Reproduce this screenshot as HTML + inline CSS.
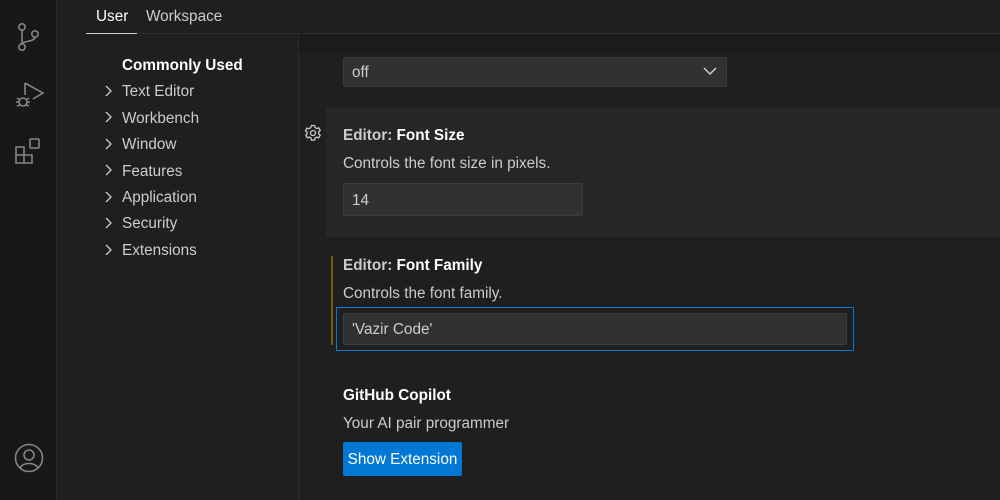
<!DOCTYPE html>
<html><head><style>
*{margin:0;padding:0;box-sizing:border-box}
body{width:1000px;height:500px;background:#1f1f1f;font-family:"Liberation Sans",sans-serif;color:#ccc;position:relative;overflow:hidden;font-size:15.3px}
.a{position:absolute}
.ab{left:0;top:0;width:57px;height:500px;background:#181818;border-right:1px solid #2b2b2b}
.t{white-space:nowrap}
.toc{left:122px;color:#ccc}
.box{background:#313131;border:1px solid #3c3c3c;border-radius:2px;color:#ccc;padding-left:8px;display:flex;align-items:center}
b{color:#fff}
</style></head><body>
<div class="a ab"></div>
<svg class="a" style="left:13px;top:20px" width="30" height="34" viewBox="0 0 30 34" fill="none" stroke="#858585" stroke-width="1.6"><circle cx="9" cy="7" r="3.2"/><circle cx="9" cy="27" r="3.2"/><circle cx="22" cy="14" r="3.2"/><path d="M9 10v14M22 17c0 5-13 4-13 7"/></svg>
<svg class="a" style="left:12px;top:78px" width="34" height="34" viewBox="0 0 34 34" fill="none" stroke="#858585" stroke-width="1.6"><path d="M13 5v12M13 5l18 10-10 6"/><circle cx="11" cy="24" r="4"/><path d="M5 20l3 2M5 28l3-1M17 20l-3 2M17 28l-3-1M4 24h3M15 24h3"/></svg>
<svg class="a" style="left:13px;top:136px" width="34" height="34" viewBox="0 0 34 34" fill="none" stroke="#858585" stroke-width="1.6"><path d="M3 11h8v8h8v8H3zM3 19h8v8M11 19v8"/><rect x="17" y="3" width="9" height="9" rx="1"/></svg>
<svg class="a" style="left:14px;top:443px" width="30" height="30" viewBox="0 0 30 30" fill="none" stroke="#858585" stroke-width="1.6"><circle cx="15" cy="15" r="13.5"/><circle cx="15" cy="12" r="5"/><path d="M6 25c3-6 15-6 18 0"/></svg>

<div class="a t" style="left:96px;top:8px;color:#fff">User</div>
<div class="a t" style="left:146px;top:8px;color:#ccc">Workspace</div>
<div class="a" style="left:86px;top:33px;width:51px;height:1px;background:#ccc"></div>
<div class="a" style="left:137px;top:33px;width:863px;height:1px;background:#2b2b2b"></div>

<div class="a t toc" style="top:57px;color:#fff;font-weight:bold">Commonly Used</div>
<div class="a t toc" style="top:83px">Text Editor</div>
<div class="a t toc" style="top:110px">Workbench</div>
<div class="a t toc" style="top:136px">Window</div>
<div class="a t toc" style="top:163px">Features</div>
<div class="a t toc" style="top:189px">Application</div>
<div class="a t toc" style="top:215px">Security</div>
<div class="a t toc" style="top:242px">Extensions</div>
<svg class="a" style="left:104px;top:85px" width="10" height="170" fill="none" stroke="#ccc" stroke-width="1.3"><path d="M2 1l5 5-5 5M2 27l5 5-5 5M2 54l5 5-5 5M2 80l5 5-5 5M2 107l5 5-5 5M2 133l5 5-5 5M2 160l5 5-5 5"/></svg>

<div class="a" style="left:298px;top:34px;width:1px;height:466px;background:#2b2b2b"></div>
<div class="a" style="left:299px;top:34px;width:701px;height:18px;background:#1b1b1b"></div>

<div class="a box" style="left:343px;top:57px;width:384px;height:30px;padding-top:1px">off</div>
<svg class="a" style="left:703px;top:66px" width="14" height="10" fill="none" stroke="#ccc" stroke-width="1.5"><path d="M1 2l6 6 6-6"/></svg>

<div class="a" style="left:326px;top:108px;width:674px;height:129px;background:#262626"></div>
<svg class="a" style="left:304px;top:124px" width="18" height="18" viewBox="0 0 18 18" fill="none" stroke="#ccc" stroke-width="1.3"><circle cx="9" cy="9" r="2.5"/><path d="M7.5 1.5h3l.5 2 1.7 1 2-.7 1.5 2.6-1.5 1.4v2l1.5 1.4-1.5 2.6-2-.7-1.7 1-.5 2h-3l-.5-2-1.7-1-2 .7-1.5-2.6L3 10V8L1.5 6.6 3 4l2 .7 1.7-1z"/></svg>
<div class="a t" style="left:343px;top:127px;font-weight:bold;color:#ccc">Editor: <b>Font Size</b></div>
<div class="a t" style="left:343px;top:155px">Controls the font size in pixels.</div>
<div class="a box" style="left:343px;top:183px;width:240px;height:33px;padding-top:2px">14</div>

<div class="a" style="left:331px;top:256px;width:2px;height:89px;background:#73591a"></div>
<div class="a t" style="left:343px;top:257px;font-weight:bold;color:#ccc">Editor: <b>Font Family</b></div>
<div class="a t" style="left:343px;top:285px">Controls the font family.</div>
<div class="a" style="left:336px;top:307px;width:518px;height:44px;border:1px solid #0078d4"></div>
<div class="a box" style="left:343px;top:313px;width:504px;height:32px;padding-top:2px">'Vazir Code'</div>

<div class="a t" style="left:343px;top:387px;font-weight:bold;color:#fff">GitHub Copilot</div>
<div class="a t" style="left:343px;top:415px">Your AI pair programmer</div>
<div class="a t" style="left:343px;top:442px;width:119px;height:34px;background:#0078d4;border-radius:2px;color:#fff;display:flex;align-items:center;justify-content:center;padding-top:2px">Show Extension</div>
</body></html>
